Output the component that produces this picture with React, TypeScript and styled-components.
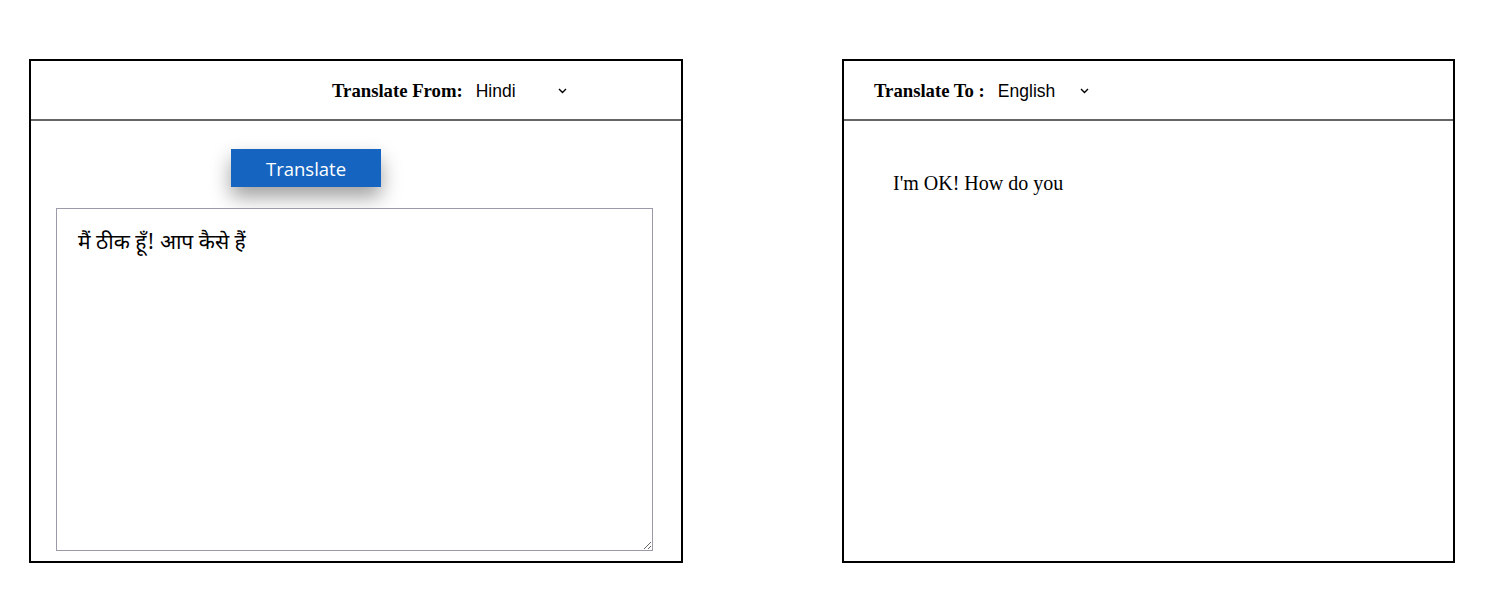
import React, { useState } from "react";
import styled, { createGlobalStyle } from "styled-components";

const GlobalStyle = createGlobalStyle`
  html, body { margin: 0; padding: 0; background: #ffffff; }
  body { font-family: "Liberation Serif", "Times New Roman", serif; }
`;

const Page = styled.div`
  display: flex;
  align-items: flex-start;
  gap: 159px;
  padding: 59px 0 0 29px;
`;

const Panel = styled.section<{ $width: number }>`
  box-sizing: border-box;
  width: ${(p) => p.$width}px;
  height: 504px;
  border: 2px solid #000;
  display: flex;
  flex-direction: column;
`;

const Header = styled.div<{ $padLeft: number }>`
  box-sizing: border-box;
  height: 60px;
  border-bottom: 2px solid #666;
  display: flex;
  align-items: center;
  padding: 2px 0 0 ${(p) => p.$padLeft}px;
  gap: 13px;
`;

const Label = styled.label`
  font-family: "Liberation Serif", "Times New Roman", serif;
  font-weight: bold;
  font-size: 18.72px;
  color: #000;
`;

const SelectWrap = styled.div`
  position: relative;
  display: inline-flex;
  align-items: center;
`;

const Select = styled.select`
  appearance: none;
  -webkit-appearance: none;
  border: none;
  outline: none;
  background: transparent;
  font-family: "Liberation Sans", Arial, sans-serif;
  font-size: 17.5px;
  color: #000;
  width: 100px;
  padding: 0;
  margin: 0;
  cursor: pointer;
`;

const Chevron = styled.svg`
  position: absolute;
  right: 9px;
  top: 50%;
  margin-top: -3px;
  pointer-events: none;
`;

const Body = styled.div`
  display: flex;
  flex-direction: column;
  align-items: flex-start;
`;

const TranslateButton = styled.button`
  margin: 28px 0 0 200px;
  width: 150px;
  height: 38px;
  border: none;
  background: #1565c0;
  color: #fff;
  font-family: "Open Sans", "Noto Sans", sans-serif;
  font-size: 18.5px;
  box-shadow: 0 10px 20px rgba(0, 0, 0, 0.38);
  cursor: pointer;
  padding: 0;
`;

const Input = styled.textarea`
  box-sizing: border-box;
  margin: 21px 0 0 25px;
  width: 597px;
  height: 343px;
  border: 1px solid #9a9aa8;
  padding: 21px 21px;
  font-family: "Nirmala UI", "Noto Sans Devanagari", "Lohit Devanagari", "Noto Sans", sans-serif;
  font-size: 21px;
  color: #000;
  resize: both;
  outline: none;
`;

const Output = styled.p`
  margin: 0;
  padding: 51px 0 0 49px;
  font-family: "Liberation Serif", "Times New Roman", serif;
  font-size: 20px;
  color: #000;
`;

const ChevronIcon = () => (
  <Chevron width="9" height="6" viewBox="0 0 9 6">
    <path d="M1 1 L4.5 4.5 L8 1" fill="none" stroke="#000" strokeWidth="1.4" />
  </Chevron>
);

export default function App() {
  const [from, setFrom] = useState("hi");
  const [to, setTo] = useState("en");
  const [text, setText] = useState("मैं ठीक हूँ! आप कैसे हैं");
  return (
    <>
      <GlobalStyle />
      <Page>
        <Panel $width={654}>
          <Header $padLeft={301}>
            <Label>Translate From:</Label>
            <SelectWrap>
              <Select value={from} onChange={(e) => setFrom(e.target.value)}>
                <option value="hi">Hindi</option>
                <option value="en">English</option>
              </Select>
              <ChevronIcon />
            </SelectWrap>
          </Header>
          <Body>
            <TranslateButton>Translate</TranslateButton>
            <Input value={text} onChange={(e) => setText(e.target.value)} />
          </Body>
        </Panel>
        <Panel $width={613}>
          <Header $padLeft={30}>
            <Label>Translate To :</Label>
            <SelectWrap>
              <Select value={to} onChange={(e) => setTo(e.target.value)}>
                <option value="en">English</option>
                <option value="hi">Hindi</option>
              </Select>
              <ChevronIcon />
            </SelectWrap>
          </Header>
          <Output>I'm OK! How do you</Output>
        </Panel>
      </Page>
    </>
  );
}
